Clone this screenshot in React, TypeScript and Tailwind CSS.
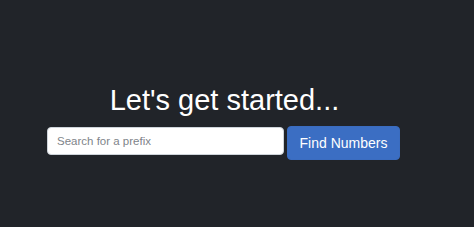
import React from "react";

export default function App() {
  return (
    <div
      className="w-full h-[227px] bg-[#212429] pt-[84px]"
      style={{ fontFamily: '"Liberation Sans", Arial, sans-serif' }}
    >
      <div className="ml-[47px] w-[353px] flex flex-col">
        <h1 className="text-[29px] leading-[32px] text-white text-center font-normal translate-x-[1px]">
          Let's get started...
        </h1>
        <div className="mt-[10px] flex items-start gap-[3px]">
          <input
            type="text"
            placeholder="Search for a prefix"
            className="mt-[1px] w-[237px] h-[28px] rounded-[4px] bg-white border border-[#ced4da] px-[9px] text-[11.5px] text-[#495057] placeholder:text-[#80848a] outline-none"
          />
          <button className="w-[113px] h-[34px] rounded-[4px] bg-[#3b6ec3] text-white text-[14px] border border-[#3a6cc0]">
            Find Numbers
          </button>
        </div>
      </div>
    </div>
  );
}
